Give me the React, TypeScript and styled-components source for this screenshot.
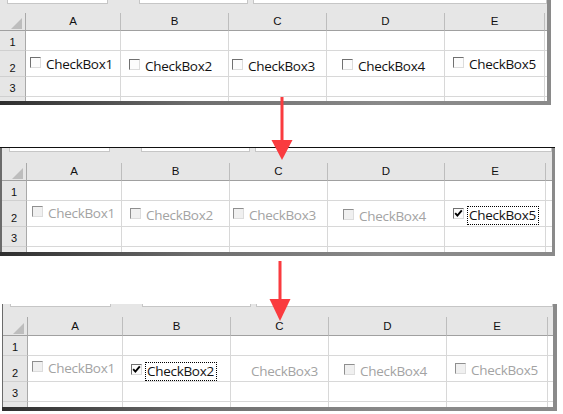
import React from 'react';
import styled, { createGlobalStyle } from 'styled-components';

const GlobalStyle = createGlobalStyle`
  html, body { margin: 0; padding: 0; background: #fff; }
  body { font-family: 'Liberation Sans', Arial, sans-serif; }
`;

type Ctl = {
  label: string;
  dx: number;
  dy: number;
  disabled?: boolean;
  checked?: boolean;
  noBox?: boolean;
};

type SheetSpec = {
  offset: number;
  edge: number;
  topLine: boolean;
  strip: number;
  band: number;
  headH: number;
  rowHead: number;
  cols: number[];
  tail: number;
  right: number;
  partial: number;
  gap: number;
  controls: Ctl[];
};

const LETTERS = ['A', 'B', 'C', 'D', 'E'];

const sheets: SheetSpec[] = [
  {
    offset: 0, edge: 0, topLine: false, strip: 4, band: 9, headH: 18, rowHead: 26,
    cols: [95, 108, 98, 118, 100], tail: 2, right: 4, partial: 4, gap: 0,
    controls: [
      { label: 'CheckBox1', dx: 4, dy: 6 },
      { label: 'CheckBox2', dx: 8, dy: 8 },
      { label: 'CheckBox3', dx: 3, dy: 8 },
      { label: 'CheckBox4', dx: 15, dy: 8 },
      { label: 'CheckBox5', dx: 8, dy: 6 },
    ],
  },
  {
    offset: 0, edge: 2, topLine: true, strip: 4, band: 11, headH: 18, rowHead: 25,
    cols: [95, 108, 98, 117, 101], tail: 6, right: 3, partial: 5, gap: 42,
    controls: [
      { label: 'CheckBox1', dx: 5, dy: 5, disabled: true },
      { label: 'CheckBox2', dx: 8, dy: 7, disabled: true },
      { label: 'CheckBox3', dx: 3, dy: 7, disabled: true },
      { label: 'CheckBox4', dx: 15, dy: 8, disabled: true },
      { label: 'CheckBox5', dx: 8, dy: 7, checked: true },
    ],
  },
  {
    offset: 2, edge: 1, topLine: false, strip: 3, band: 10, headH: 19, rowHead: 25,
    cols: [95, 108, 98, 118, 101], tail: 5, right: 4, partial: 5, gap: 48,
    controls: [
      { label: 'CheckBox1', dx: 4, dy: 5, disabled: true },
      { label: 'CheckBox2', dx: 8, dy: 8, checked: true },
      { label: 'CheckBox3', dx: 4, dy: 8, disabled: true, noBox: true },
      { label: 'CheckBox4', dx: 15, dy: 8, disabled: true },
      { label: 'CheckBox5', dx: 8, dy: 7, disabled: true },
    ],
  },
];

const Page = styled.div`
  position: relative;
  width: 563px;
  height: 414px;
  overflow: hidden;
  background: #fff;
`;

const Panel = styled.section<{ $offset: number; $gap: number; $topLine: boolean }>`
  margin-left: ${(p) => p.$offset}px;
  margin-top: ${(p) => p.$gap}px;
  width: max-content;
  border-top: ${(p) => (p.$topLine ? '1px solid #111' : 'none')};
`;

const Frame = styled.div<{ $edge: number; $right: number }>`
  border-left: ${(p) => p.$edge}px solid #6b6b6b;
  border-right: ${(p) => p.$right}px solid #8a8a8a;
  background: #e6e6e6;
`;

const Strip = styled.div<{ $h: number }>`
  display: flex;
  height: ${(p) => p.$h}px;
  padding-left: 7px;
  gap: 0;
`;

const StripBox = styled.div<{ $w?: number; $ml: number }>`
  margin-left: ${(p) => p.$ml}px;
  ${(p) => (p.$w ? `width: ${p.$w}px;` : 'flex: 1;')}
  background: #fff;
  border: 1px solid #c6c6c6;
  border-top: none;
  box-sizing: border-box;
`;

const Band = styled.div<{ $h: number }>`
  height: ${(p) => p.$h}px;
`;

const Grid = styled.div<{ $cols: string; $rows: string }>`
  display: grid;
  grid-template-columns: ${(p) => p.$cols};
  grid-template-rows: ${(p) => p.$rows};
  background: #fff;
`;

const Corner = styled.div`
  position: relative;
  background: #e6e6e6;
  border-right: 1px solid #a9a9a9;
  border-bottom: 1px solid #a0a0a0;
  display: flex;
  justify-content: flex-end;
  align-items: flex-end;
  padding: 0 3px 1px 0;
`;

const Triangle = styled.div`
  width: 0;
  height: 0;
  border-left: 11px solid transparent;
  border-bottom: 11px solid #bdbdbd;
`;

const ColHead = styled.div<{ $last?: boolean }>`
  background: #e6e6e6;
  border-right: ${(p) => (p.$last ? 'none' : '1px solid #bdbdbd')};
  border-bottom: 1px solid #a0a0a0;
  display: flex;
  align-items: center;
  justify-content: center;
  padding-bottom: 1px;
  font-size: 11.5px;
  color: #111;
`;

const RowHead = styled.div<{ $open?: boolean }>`
  background: #e6e6e6;
  border-right: 1px solid #a9a9a9;
  border-bottom: ${(p) => (p.$open ? 'none' : '1px solid #d0d0d0')};
  display: flex;
  align-items: flex-end;
  justify-content: center;
  padding-bottom: 1px;
  font-size: 11px;
  line-height: 13px;
  color: #111;
`;

const Cell = styled.div<{ $open?: boolean; $last?: boolean; $dx?: number; $dy?: number }>`
  background: #fff;
  border-right: ${(p) => (p.$last ? 'none' : '1px solid #d8d8d8')};
  border-bottom: ${(p) => (p.$open ? 'none' : '1px solid #d8d8d8')};
  padding: ${(p) => `${p.$dy ?? 0}px 0 0 ${p.$dx ?? 0}px`};
  display: flex;
  align-items: flex-start;
  min-width: 0;
`;

const Control = styled.div`
  display: flex;
  align-items: flex-start;
  background: #fff;
`;

const Box = styled.div<{ $disabled?: boolean; $hidden?: boolean }>`
  width: 11px;
  height: 11px;
  box-sizing: border-box;
  flex: none;
  visibility: ${(p) => (p.$hidden ? 'hidden' : 'visible')};
  border-top: 1px solid ${(p) => (p.$disabled ? '#8f8f8f' : '#707070')};
  border-left: 1px solid ${(p) => (p.$disabled ? '#8f8f8f' : '#707070')};
  border-right: 1px solid #dcdcdc;
  border-bottom: 1px solid #dcdcdc;
  background: ${(p) => (p.$disabled ? '#f0f0f0' : '#fcfcfc')};
  display: flex;
  align-items: center;
  justify-content: center;
`;

const Label = styled.span<{ $disabled?: boolean; $focus?: boolean }>`
  margin: -2px 0 0 3px;
  padding: 0 2px 0 1px;
  border: 1px dotted ${(p) => (p.$focus ? '#000' : 'transparent')};
  font-family: 'Open Sans', 'Liberation Sans', sans-serif;
  font-size: 13.5px;
  letter-spacing: -0.3px;
  line-height: 17px;
  white-space: nowrap;
  color: ${(p) => (p.$disabled ? '#a3a3a3' : '#111')};
`;

const Shadow = styled.div`
  height: 4px;
  background: linear-gradient(to right, #2e2e2e, #6d6d6d 35%, #8a8a8a 70%);
`;

const ArrowSvg = styled.svg<{ $x: number; $y: number }>`
  position: absolute;
  left: ${(p) => p.$x}px;
  top: ${(p) => p.$y}px;
  overflow: visible;
`;

function Arrow({ cx, top, headTop, tip }: { cx: number; top: number; headTop: number; tip: number }) {
  const h = tip - top;
  const hy = headTop - top;
  return (
    <ArrowSvg $x={cx - 11} $y={top} width={22} height={h} viewBox={`0 0 22 ${h}`}>
      <rect x={9.5} y={0} width={3} height={hy + 1} fill="#fa3b3f" />
      <path d={`M0.5 ${hy} L21.5 ${hy} L11 ${h} Z`} fill="#fa3b3f" />
    </ArrowSvg>
  );
}

function CheckMark() {
  return (
    <svg width="9" height="9" viewBox="0 0 9 9">
      <path d="M1.2 4.2 L3.4 6.6 L7.8 1.4" fill="none" stroke="#000" strokeWidth="1.9" />
    </svg>
  );
}

function CheckControl({ ctl }: { ctl: Ctl }) {
  return (
    <Control>
      <Box $disabled={ctl.disabled} $hidden={ctl.noBox}>
        {ctl.checked && <CheckMark />}
      </Box>
      <Label $disabled={ctl.disabled} $focus={ctl.checked}>
        {ctl.label}
      </Label>
    </Control>
  );
}

function Sheet({ s }: { s: SheetSpec }) {
  const colTpl = [s.rowHead, ...s.cols, s.tail].map((w) => `${w}px`).join(' ');
  const rowTpl = [s.headH, 20, 26, 20, s.partial].map((h) => `${h}px`).join(' ');
  const rows = ['1', '2', '3', ''];
  return (
    <Panel $offset={s.offset} $gap={s.gap} $topLine={s.topLine}>
      <Frame $edge={s.edge} $right={s.right}>
        <Strip $h={s.strip}>
          <StripBox $ml={0} $w={101} />
          <StripBox $ml={31} $w={109} />
          <StripBox $ml={5} />
        </Strip>
        <Band $h={s.band} />
        <Grid $cols={colTpl} $rows={rowTpl}>
          <Corner>
            <Triangle />
          </Corner>
          {LETTERS.map((l) => (
            <ColHead key={l}>{l}</ColHead>
          ))}
          <ColHead $last />
          {rows.map((r, ri) => (
            <React.Fragment key={ri}>
              <RowHead $open={ri === 3}>{r}</RowHead>
              {LETTERS.map((l, ci) =>
                ri === 1 ? (
                  <Cell key={l} $dx={s.controls[ci].dx} $dy={s.controls[ci].dy}>
                    <CheckControl ctl={s.controls[ci]} />
                  </Cell>
                ) : (
                  <Cell key={l} $open={ri === 3} />
                )
              )}
              <Cell $last $open={ri === 3} />
            </React.Fragment>
          ))}
        </Grid>
      </Frame>
      <Shadow />
    </Panel>
  );
}

export default function App() {
  return (
    <>
      <GlobalStyle />
      <Page>
        {sheets.map((s, i) => (
          <Sheet key={i} s={s} />
        ))}
        <Arrow cx={282} top={97} headTop={140} tip={160} />
        <Arrow cx={280} top={261} headTop={299} tip={321} />
      </Page>
    </>
  );
}
